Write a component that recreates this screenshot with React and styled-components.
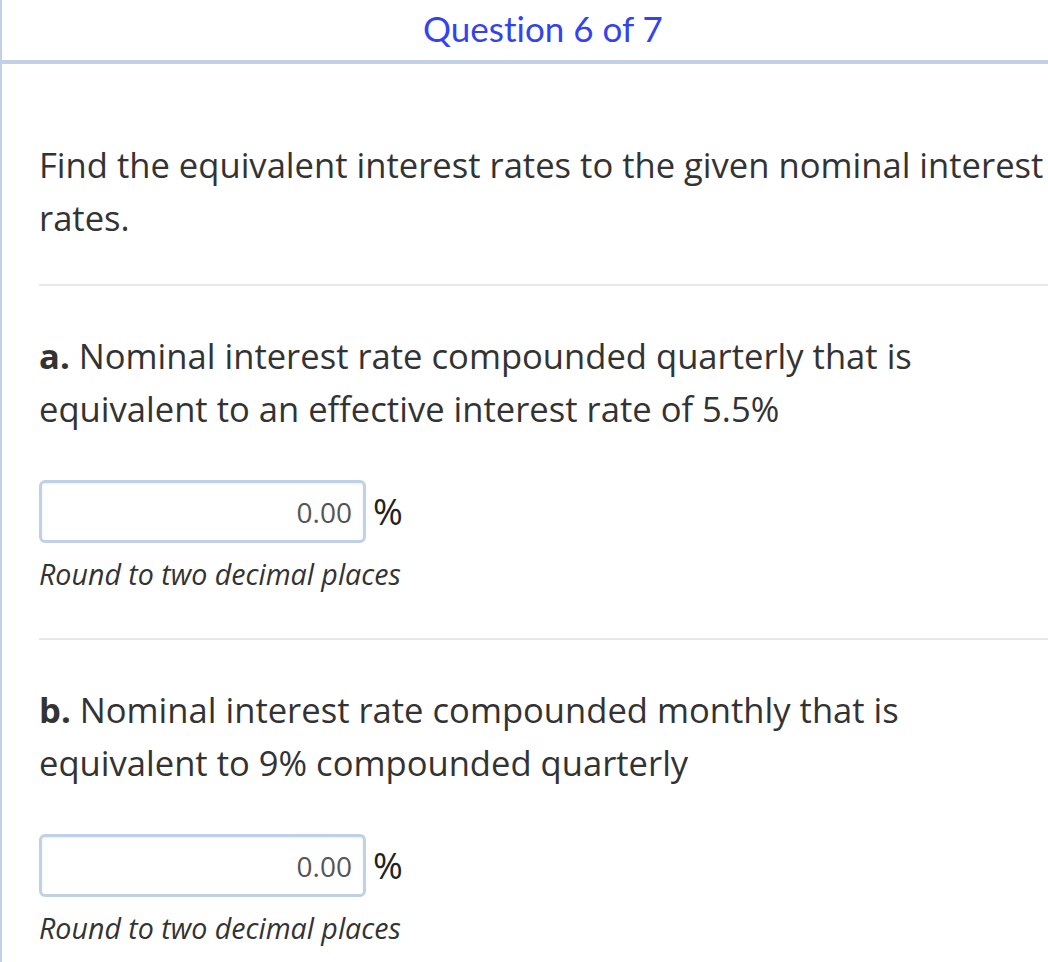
import React from 'react';
import styled, { createGlobalStyle } from 'styled-components';

const GlobalStyle = createGlobalStyle`
html, body {
	margin: 0;
	padding: 0;
	background: #fff;
	overflow: hidden;
}
`

const Page = styled.div`
width: 1082px;
min-height: 962px;
border-left: 2px solid #c0d1e6;
font-family: "Open Sans", "Liberation Sans", sans-serif;
color: #333;
`
const Header = styled.div`
box-sizing: border-box;
height: 64px;
padding-bottom: 5px;
display: flex;
align-items: center;
justify-content: center;
border-bottom: 4px solid #c0d1e6;
font-family: Lato, "Open Sans", sans-serif;
font-size: 35px;
font-variant-ligatures: none;
color: #3344ee;
`
const Content = styled.div`
padding: 74px 0 0 37px;
`
const Prompt = styled.p`
margin: 0;
font-size: 34.6px;
line-height: 53px;
max-width: 1030px;
`
const Divider = styled.hr`
margin: 40px 0 43px;
border: none;
border-top: 2px solid #e8e8e8;
`
const Part = styled.div`
display: flex;
flex-direction: column;
padding-bottom: 4px;
`
const Label = styled.b`
font-weight: 700;
`
const AnswerRow = styled.div`
display: flex;
align-items: center;
gap: 7px;
margin-top: 45px;
`
const Field = styled.div`
box-sizing: border-box;
width: 327px;
height: 63px;
border: 3px solid #c0d1e6;
border-radius: 6px;
box-shadow: inset 0 1px 2px rgba(0, 0, 0, 0.08);
display: flex;
align-items: center;
justify-content: flex-end;
padding-right: 11px;
font-size: 28px;
color: #555;
`
const Unit = styled.span`
font-size: 36px;
color: #222;
`
const Hint = styled.div`
margin-top: 11px;
font-style: italic;
font-size: 28.6px;
line-height: 40px;
color: #333;
`

function Question({ label, children }) {
	return (
		<Part>
			<Prompt><Label>{label}</Label> {children}</Prompt>
			<AnswerRow>
				<Field>0.00</Field>
				<Unit>%</Unit>
			</AnswerRow>
			<Hint>Round to two decimal places</Hint>
		</Part>
	)
}

export default function App() {
	return (
		<>
			<GlobalStyle />
			<Page>
				<Header>Question 6 of 7</Header>
				<Content>
					<Prompt>Find the equivalent interest rates to the given nominal interest rates.</Prompt>
					<Divider />
					<Question label="a.">
						Nominal interest rate compounded quarterly that is<br />equivalent to an effective interest rate of 5.5%
					</Question>
					<Divider />
					<Question label="b.">
						Nominal interest rate compounded monthly that is<br />equivalent to 9% compounded quarterly
					</Question>
				</Content>
			</Page>
		</>
	)
}
